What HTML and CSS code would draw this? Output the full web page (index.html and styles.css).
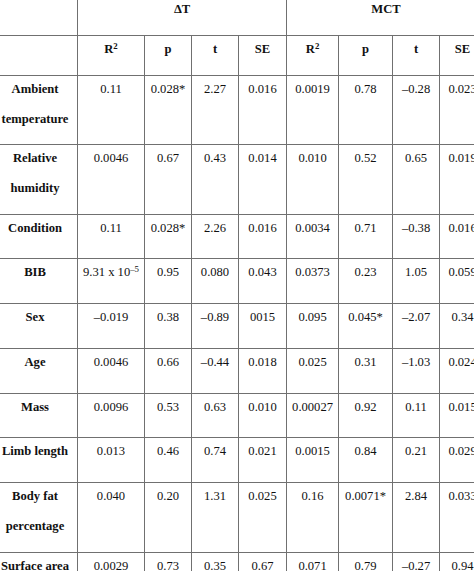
FILE: index.html
```html
<!DOCTYPE html>
<html>
<head>
<meta charset="utf-8">
<link rel="stylesheet" href="styles.css">
</head>
<body>
<table class="stats">
  <colgroup>
    <col class="w-label">
    <col class="w-r2a"><col class="w-pa"><col class="w-ta"><col class="w-sea">
    <col class="w-r2b"><col class="w-pb"><col class="w-tb"><col class="w-seb">
  </colgroup>
  <tr class="h40">
    <td></td>
    <th colspan="4"><div class="c">ΔT</div></th>
    <th colspan="4"><div class="c">MCT</div></th>
  </tr>
  <tr class="h40">
    <td></td>
    <th><div class="c">R<sup>2</sup></div></th><th><div class="c">p</div></th><th><div class="c">t</div></th><th><div class="c">SE</div></th>
    <th><div class="c">R<sup>2</sup></div></th><th><div class="c">p</div></th><th><div class="c">t</div></th><th><div class="c">SE</div></th>
  </tr>
  <tr class="h69">
    <th><div class="c">Ambient<br>temperature</div></th>
    <td><div class="c">0.11</div></td><td><div class="c">0.028*</div></td><td><div class="c">2.27</div></td><td><div class="c">0.016</div></td>
    <td><div class="c">0.0019</div></td><td><div class="c">0.78</div></td><td><div class="c">–0.28</div></td><td><div class="c">0.023</div></td>
  </tr>
  <tr class="h70">
    <th><div class="c">Relative<br>humidity</div></th>
    <td><div class="c">0.0046</div></td><td><div class="c">0.67</div></td><td><div class="c">0.43</div></td><td><div class="c">0.014</div></td>
    <td><div class="c">0.010</div></td><td><div class="c">0.52</div></td><td><div class="c">0.65</div></td><td><div class="c">0.019</div></td>
  </tr>
  <tr class="h44">
    <th><div class="c">Condition</div></th>
    <td><div class="c">0.11</div></td><td><div class="c">0.028*</div></td><td><div class="c">2.26</div></td><td><div class="c">0.016</div></td>
    <td><div class="c">0.0034</div></td><td><div class="c">0.71</div></td><td><div class="c">–0.38</div></td><td><div class="c">0.016</div></td>
  </tr>
  <tr class="h45">
    <th><div class="c">BIB</div></th>
    <td><div class="c">9.31 x 10<sup>–5</sup></div></td><td><div class="c">0.95</div></td><td><div class="c">0.080</div></td><td><div class="c">0.043</div></td>
    <td><div class="c">0.0373</div></td><td><div class="c">0.23</div></td><td><div class="c">1.05</div></td><td><div class="c">0.059</div></td>
  </tr>
  <tr class="h45">
    <th><div class="c">Sex</div></th>
    <td><div class="c">–0.019</div></td><td><div class="c">0.38</div></td><td><div class="c">–0.89</div></td><td><div class="c">0015</div></td>
    <td><div class="c">0.095</div></td><td><div class="c">0.045*</div></td><td><div class="c">–2.07</div></td><td><div class="c">0.34</div></td>
  </tr>
  <tr class="h45">
    <th><div class="c">Age</div></th>
    <td><div class="c">0.0046</div></td><td><div class="c">0.66</div></td><td><div class="c">–0.44</div></td><td><div class="c">0.018</div></td>
    <td><div class="c">0.025</div></td><td><div class="c">0.31</div></td><td><div class="c">–1.03</div></td><td><div class="c">0.024</div></td>
  </tr>
  <tr class="h44">
    <th><div class="c">Mass</div></th>
    <td><div class="c">0.0096</div></td><td><div class="c">0.53</div></td><td><div class="c">0.63</div></td><td><div class="c">0.010</div></td>
    <td><div class="c">0.00027</div></td><td><div class="c">0.92</div></td><td><div class="c">0.11</div></td><td><div class="c">0.015</div></td>
  </tr>
  <tr class="h45">
    <th><div class="c">Limb length</div></th>
    <td><div class="c">0.013</div></td><td><div class="c">0.46</div></td><td><div class="c">0.74</div></td><td><div class="c">0.021</div></td>
    <td><div class="c">0.0015</div></td><td><div class="c">0.84</div></td><td><div class="c">0.21</div></td><td><div class="c">0.029</div></td>
  </tr>
  <tr class="h70">
    <th><div class="c">Body fat<br>percentage</div></th>
    <td><div class="c">0.040</div></td><td><div class="c">0.20</div></td><td><div class="c">1.31</div></td><td><div class="c">0.025</div></td>
    <td><div class="c">0.16</div></td><td><div class="c">0.0071*</div></td><td><div class="c">2.84</div></td><td><div class="c">0.033</div></td>
  </tr>
  <tr class="h45">
    <th><div class="c">Surface area</div></th>
    <td><div class="c">0.0029</div></td><td><div class="c">0.73</div></td><td><div class="c">0.35</div></td><td><div class="c">0.67</div></td>
    <td><div class="c">0.071</div></td><td><div class="c">0.79</div></td><td><div class="c">–0.27</div></td><td><div class="c">0.94</div></td>
  </tr>
</table>
</body>
</html>
```

FILE: styles.css
```css
html, body {
  margin: 0;
  padding: 0;
  background: #ffffff;
  overflow: hidden;
}

.stats {
  border-collapse: collapse;
  table-layout: fixed;
  width: 493px;
  margin-left: -8px;
  margin-top: -5px;
  font-family: "Liberation Serif", "Times New Roman", serif;
  font-size: 12.6px;
  color: #111111;
}

.w-label { width: 85px; }
.w-r2a { width: 67px; }
.w-pa { width: 47px; }
.w-ta { width: 47px; }
.w-sea { width: 48px; }
.w-r2b { width: 52px; }
.w-pb { width: 54px; }
.w-tb { width: 47px; }
.w-seb { width: 46px; }

.stats td,
.stats th {
  border: 1px solid #707070;
  padding: 0;
  text-align: center;
  vertical-align: top;
  line-height: 29.5px;
  white-space: nowrap;
  overflow: hidden;
}

.stats th {
  font-weight: bold;
}

.stats td {
  font-weight: normal;
}

.c {
  margin-top: -1px;
}

.stats sup {
  font-size: 0.7em;
  line-height: 0;
  vertical-align: 0.45em;
}

.h40 > * { height: 39px; }
.h44 > * { height: 43px; }
.h45 > * { height: 44px; }
.h69 > * { height: 68px; }
.h70 > * { height: 69px; }
```
